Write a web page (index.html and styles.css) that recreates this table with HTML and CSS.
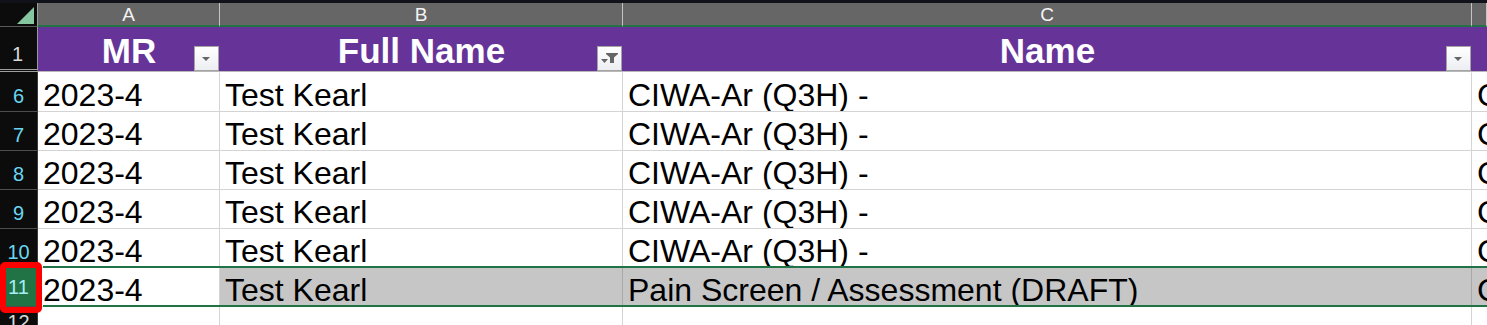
FILE: index.html
```html
<!DOCTYPE html>
<html>
<head>
<meta charset="utf-8">
<link rel="stylesheet" href="styles.css">
</head>
<body>
<div class="sheet">
  <div class="topbar"></div>
  <div class="grid">
    <div class="corner"><div class="tri"></div></div>
    <div class="colhdr">A</div>
    <div class="colhdr">B</div>
    <div class="colhdr">C</div>
    <div class="colhdr last"></div>

    <div class="rn rn-head">1</div>
    <div class="th">MR<span class="fbtn"><svg width="23" height="23" viewBox="0 0 23 23"><polygon points="7,10 15,10 11,14" fill="#666"/></svg></span></div>
    <div class="th">Full Name<span class="fbtn"><svg width="23" height="23" viewBox="0 0 23 23"><path d="M8 6 H20 V7 L16 10.5 V16 H12 V10.5 L8 7 Z" fill="#666"/><polygon points="3,12 10,12 6.5,16" fill="#666"/></svg></span></div>
    <div class="th">Name<span class="fbtn"><svg width="23" height="23" viewBox="0 0 23 23"><polygon points="7,10 15,10 11,14" fill="#666"/></svg></span></div>
    <div class="th last"></div>

    <div class="rn f first">6</div>
    <div class="td first">2023-4</div>
    <div class="td first">Test Kearl</div>
    <div class="td first">CIWA-Ar (Q3H) -</div>
    <div class="td first last">CIWA-Ar (Q3H) - Narrative</div>

    <div class="rn f">7</div>
    <div class="td">2023-4</div>
    <div class="td">Test Kearl</div>
    <div class="td">CIWA-Ar (Q3H) -</div>
    <div class="td last">CIWA-Ar (Q3H) - Narrative</div>

    <div class="rn f">8</div>
    <div class="td">2023-4</div>
    <div class="td">Test Kearl</div>
    <div class="td">CIWA-Ar (Q3H) -</div>
    <div class="td last">CIWA-Ar (Q3H) - Narrative</div>

    <div class="rn f">9</div>
    <div class="td">2023-4</div>
    <div class="td">Test Kearl</div>
    <div class="td">CIWA-Ar (Q3H) -</div>
    <div class="td last">CIWA-Ar (Q3H) - Narrative</div>

    <div class="rn f">10</div>
    <div class="td">2023-4</div>
    <div class="td">Test Kearl</div>
    <div class="td">CIWA-Ar (Q3H) -</div>
    <div class="td last">CIWA-Ar (Q3H) - Narrative</div>

    <div class="rn f sel">11</div>
    <div class="td">2023-4</div>
    <div class="td hl">Test Kearl</div>
    <div class="td hl">Pain Screen / Assessment (DRAFT)</div>
    <div class="td hl last">Comments</div>

    <div class="rn r12">12</div>
    <div class="td"></div>
    <div class="td"></div>
    <div class="td"></div>
    <div class="td last"></div>
  </div>
  <div class="selection"></div>
  <div class="annot"></div>
</div>
</body>
</html>
```
FILE: styles.css
```css
html, body {
  margin: 0;
  padding: 0;
  background: #ffffff;
  overflow: hidden;
}
.sheet {
  position: relative;
  width: 1487px;
  height: 325px;
  overflow: hidden;
  font-family: "Liberation Sans", Arial, sans-serif;
}
.topbar {
  height: 3px;
  background: #10121a;
}
.grid {
  display: grid;
  grid-template-columns: 38px 182px 403px 849px 1fr;
  grid-template-rows: 24px 45px 40px 39px 39px 39px 39px 39px 39px;
}
.grid > div {
  box-sizing: border-box;
  min-width: 0;
  overflow: hidden;
  white-space: nowrap;
}
.corner {
  background: #0c0c0c;
  border-right: 1px solid #9a9a9a;
  border-bottom: 1px solid #5a5a5a;
  position: relative;
}
.tri {
  position: absolute;
  left: 17px;
  top: 4px;
  width: 0;
  height: 0;
  border-left: 17px solid transparent;
  border-bottom: 17px solid #86c6a0;
}
.colhdr {
  background: #666666;
  color: #f4f4f4;
  font-size: 19px;
  border-right: 1px solid #c4c4c4;
  border-bottom: 2px solid #217346;
  display: flex;
  justify-content: center;
  align-items: flex-end;
  line-height: 19px;
  padding-bottom: 1px;
}
.colhdr.last { border-right: 1px solid #c4c4c4; }
.rn {
  background: #0c0c0c;
  color: #d8d8d8;
  font-size: 20px;
  line-height: 20px;
  border-right: 1px solid #3a3a3a;
  border-bottom: 1px solid #4d4d4d;
  display: flex;
  justify-content: center;
  align-items: flex-end;
  padding-bottom: 5px;
}
.rn-head {
  border-right: 1px solid #9a9a9a;
  border-bottom: 3px double #a0a0a0;
  padding-bottom: 5px;
  padding-right: 2px;
}
.rn.f { color: #6ad6f2; }
.rn.sel {
  background: #217346;
  color: #a6eef6;
  align-items: center;
  padding-bottom: 0;
}
.rn.r12 {
  align-items: flex-start;
  padding-top: 5px;
  padding-bottom: 0;
}
.th {
  position: relative;
  background: #663399;
  color: #ffffff;
  font-weight: bold;
  font-size: 35px;
  line-height: 35px;
  border-bottom: 1px solid #b8b8b8;
  display: flex;
  justify-content: center;
  align-items: flex-end;
  padding-bottom: 3px;
}
.fbtn {
  position: absolute;
  right: 1px;
  bottom: 0;
  width: 25px;
  height: 25px;
  box-sizing: border-box;
  border: 1px solid #a4a4a4;
  background: linear-gradient(#ffffff, #eceef2);
  display: block;
}
.fbtn svg {
  display: block;
}
.td {
  background: #ffffff;
  color: #000000;
  font-size: 32px;
  line-height: 32px;
  border-right: 1px solid #d4d4d4;
  border-bottom: 1px solid #d4d4d4;
  display: flex;
  align-items: flex-end;
  padding-left: 5px;
}
.td.first {
  border-top: 1px solid #ffffff;
}
.td.hl {
  background: #c6c6c6;
  border-right-color: #a8a8a8;
}
.td.last {
  border-right: none;
}
.selection {
  position: absolute;
  left: 43px;
  right: 0;
  top: 266px;
  height: 41px;
  box-sizing: border-box;
  border-top: 2px solid #217346;
  border-bottom: 2px solid #217346;
  pointer-events: none;
}
.annot {
  position: absolute;
  left: 0;
  top: 262px;
  width: 42px;
  height: 51px;
  box-sizing: border-box;
  border: 6px solid #ff0000;
  border-radius: 5px;
}
```
